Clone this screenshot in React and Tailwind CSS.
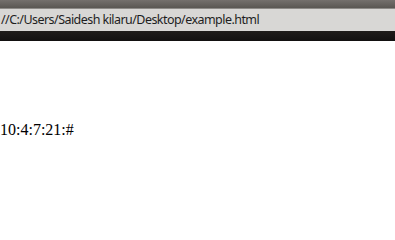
import React from 'react';

const App = () => {
  return (
    <div className="w-[395px] h-[207px] bg-white overflow-hidden">
      <div className="h-[8px] bg-gradient-to-b from-[#74706d] to-[#5a5753]" />
      <div className="h-[1px] bg-[#8c8a87]" />
      <div className="h-[22px] bg-[#d8d7d5] flex items-center overflow-hidden">
        <span className="pl-[1px] whitespace-nowrap text-[12.5px] leading-none text-[#1e1e1e] font-['Noto_Sans',sans-serif] tracking-[-0.55px]">
          //C:/Users/Saidesh kilaru/Desktop/example.html
        </span>
      </div>
      <div className="h-[10px] bg-gradient-to-b from-[#1f1c1a] to-[#121010]" />
      <div className="pt-[81px] text-[16px] leading-none text-black font-['Liberation_Serif',serif]">
        10:4:7:21:#
      </div>
    </div>
  );
};

export default App;
